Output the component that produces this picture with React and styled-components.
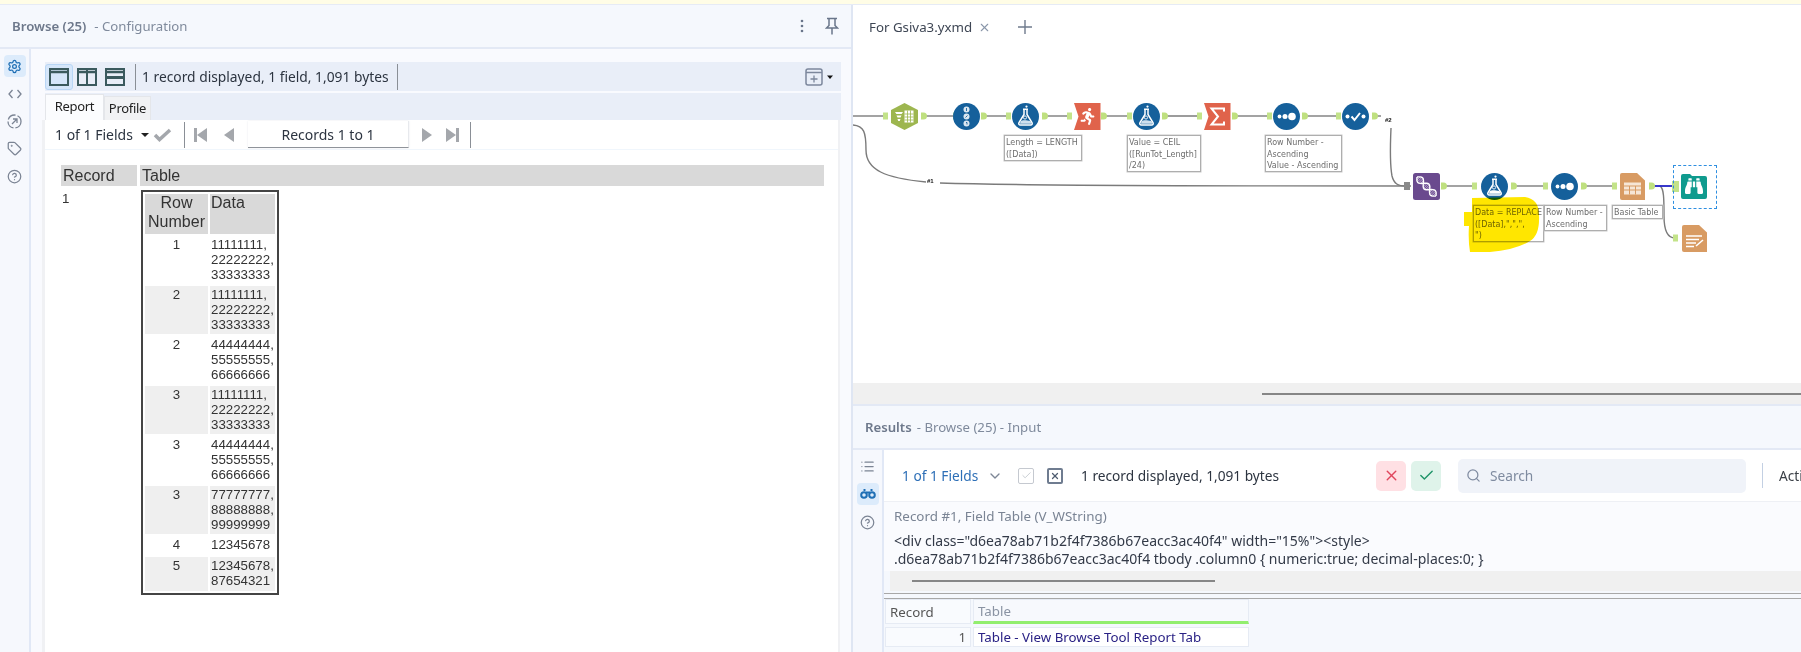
import React from "react";
import styled, { createGlobalStyle } from "styled-components";
import { Settings, Tag, CircleHelp, Search, X, Check, ChevronDown, List } from "lucide-react";
import { FaBinoculars, FaRunning } from "react-icons/fa";

const UI_FONT = `"Noto Sans", "Open Sans", sans-serif`;
const REPORT_FONT = `"Liberation Sans", Arial, sans-serif`;

const Global = createGlobalStyle`
  html, body { margin: 0; padding: 0; background: #fff; }
  body { font-family: ${UI_FONT}; overflow: hidden; }
  * { box-sizing: border-box; }
`;

const Page = styled.div`
  width: 1801px;
  height: 652px;
  display: flex;
  flex-direction: column;
  overflow: hidden;
`;

const NoticeStrip = styled.div`
  height: 5px;
  background: #fffde6;
  border-bottom: 1px solid #e6ebf5;
`;

const Workspace = styled.div`
  flex: 1;
  display: flex;
  min-height: 0;
`;

/* left side, configuration */
const ConfigPanel = styled.section`
  width: 851px;
  display: flex;
  flex-direction: column;
  background: #f9fafe;
`;

const PanelHeader = styled.header`
  height: 44px;
  flex: none;
  display: flex;
  align-items: center;
  padding: 0 12px;
  background: #f5f8fd;
  border-bottom: 2px solid #e3e9f5;
  font-size: 13.2px;
  color: #7f8a9c;
`;

const HeaderTitle = styled.strong`
  font-weight: 600;
  color: #6d788b;
  margin-right: ${(p) => p.$gap}px;
`;

const HeaderTools = styled.div`
  margin-left: auto;
  display: flex;
  align-items: center;
  gap: 21px;
`;

const PanelBody = styled.div`
  flex: 1;
  display: flex;
  min-height: 0;
`;

const Rail = styled.nav`
  width: ${(p) => p.$width}px;
  flex: none;
  display: flex;
  flex-direction: column;
  align-items: center;
  gap: ${(p) => p.$gap}px;
  padding-top: ${(p) => p.$top}px;
  border-right: 2px solid #e1e8f6;
  background: #f6f8fd;
`;

const RailButton = styled.div`
  width: 22px;
  height: 22px;
  display: flex;
  align-items: center;
  justify-content: center;
  border-radius: 4px;
  color: ${(p) => (p.$active ? "#1f6fb5" : "#7b8494")};
  background: ${(p) => (p.$active ? "#dcebfb" : "transparent")};
`;

const ConfigMain = styled.div`
  flex: 1;
  min-width: 0;
  padding: 13px 10px 0 14px;
  display: flex;
  flex-direction: column;
`;

const ViewToolbar = styled.div`
  height: 29px;
  flex: none;
  display: flex;
  align-items: center;
  padding-right: 7px;
  background: #e9eef8;
  font-size: 13.8px;
  color: #2c3440;
`;

const LayoutButton = styled.div`
  width: 28px;
  height: 26px;
  display: flex;
  align-items: center;
  justify-content: center;
  border-radius: 3px;
  background: ${(p) => (p.$active ? "#d5e6fa" : "transparent")};
  border: 1px solid ${(p) => (p.$active ? "#b9d6f5" : "transparent")};
`;

const ToolSep = styled.div`
  width: 1px;
  height: 26px;
  background: #8a8f96;
  margin: 0 ${(p) => p.$gap || 8}px;
`;

const TabStrip = styled.div`
  height: 27px;
  flex: none;
  margin-top: 2px;
  display: flex;
  align-items: flex-end;
  background: #e9eef8;
  font-size: 13px;
  letter-spacing: -0.3px;
  color: #222;
`;

const Tab = styled.div`
  height: ${(p) => (p.$active ? 26 : 24)}px;
  width: ${(p) => (p.$active ? 59 : 47)}px;
  display: flex;
  align-items: center;
  justify-content: center;
  padding-bottom: ${(p) => (p.$active ? 3 : 1)}px;
  background: ${(p) => (p.$active ? "#fbfcfe" : "#f1f2f4")};
  border: 1px solid #e4e6ea;
  border-bottom: 0;
`;

const ReportSheet = styled.div`
  flex: 1;
  background: #fff;
  margin-right: 3px;
  box-shadow: -3px 0 0 #f0f1f4, 2px 0 0 #f0f1f4;
  display: flex;
  flex-direction: column;
  min-height: 0;
`;

const RecordsBar = styled.div`
  height: 30px;
  flex: none;
  display: flex;
  align-items: center;
  padding-left: 10px;
  border-bottom: 1px solid #f0f6fc;
  font-size: 14px;
  color: #2c3440;
`;

const FieldsLabel = styled.span`
  width: 85px;
  flex: none;
`;

const RangeBox = styled.div`
  width: 161px;
  height: 27px;
  flex: none;
  display: flex;
  align-items: center;
  justify-content: center;
  border-bottom: 1px solid #8f939a;
  border-right: 1px solid #e7e9ed;
  box-shadow: 0 0 2px #e8eaee;
`;

const NavIcon = styled.svg`
  width: 14px;
  height: 16px;
  flex: none;
  margin: ${(p) => p.$margin};
`;

const ReportHead = styled.div`
  display: flex;
  gap: 3px;
  margin: 15px 14px 0 16px;
  font: 16px ${REPORT_FONT};
  color: #333;
`;

const HeadCell = styled.div`
  height: 21px;
  line-height: 21px;
  padding-left: 2px;
  background: #d9d9d9;
  width: ${(p) => (p.$width ? `${p.$width}px` : "auto")};
  flex: ${(p) => (p.$width ? "none" : 1)};
`;

const ReportRow = styled.div`
  display: flex;
  margin: 4px 0 0 16px;
  font: 13.3px ${REPORT_FONT};
  color: #333;
`;

const RowNumber = styled.div`
  width: 80px;
  padding: 2px 0 0 1px;
  line-height: 14px;
`;

const NestedTable = styled.table`
  border: 2px solid #444;
  border-spacing: 2px;
  border-collapse: separate;
  background: #fff;
  font: 13.3px/15px ${REPORT_FONT};
  color: #333;
`;

const NestedHead = styled.th`
  height: 40px;
  width: ${(p) => p.$width}px;
  padding: 0 0 0 ${(p) => (p.$center ? 0 : 1)}px;
  background: #d9d9d9;
  font: 400 16px/18.5px ${REPORT_FONT};
  text-align: ${(p) => (p.$center ? "center" : "left")};
  vertical-align: top;
`;

const NestedCell = styled.td`
  height: ${(p) => p.$h}px;
  padding: 1px 1px 2px;
  vertical-align: top;
  text-align: ${(p) => (p.$center ? "center" : "left")};
  background: ${(p) => (p.$shade ? "#efefef" : "#fff")};
  white-space: pre-line;
`;

const Divider = styled.div`
  width: 2px;
  flex: none;
  background: #dfe6f3;
`;

/* right side, workflow and results */
const WorkflowPanel = styled.section`
  flex: 1;
  min-width: 0;
  display: flex;
  flex-direction: column;
  background: #fff;
`;

const DocTabs = styled.div`
  height: 44px;
  flex: none;
  display: flex;
  align-items: center;
  padding-left: 16px;
  font-size: 13.3px;
  color: #3e4654;
`;

const DocClose = styled.span`
  display: flex;
  margin-left: 6px;
  color: #8b97aa;
`;

const DocAdd = styled.span`
  display: flex;
  margin-left: 27px;
  color: #6f7b8d;
`;

const Canvas = styled.div`
  position: relative;
  flex: 1;
  min-height: 0;
  overflow: hidden;
`;

const WireLayer = styled.svg`
  position: absolute;
  left: 0;
  top: 0;
  overflow: visible;
`;

const Node = styled.svg`
  position: absolute;
  left: ${(p) => p.$x - 853}px;
  top: ${(p) => p.$y - 49}px;
  overflow: visible;
`;

const GlyphBadge = styled.span`
  position: absolute;
  left: ${(p) => p.$x - 853}px;
  top: ${(p) => p.$y - 49}px;
  display: flex;
  color: #fff;
`;

const Note = styled.div`
  position: absolute;
  left: ${(p) => p.$x - 853}px;
  top: ${(p) => p.$y - 49}px;
  width: ${(p) => p.$w}px;
  height: ${(p) => p.$h}px;
  padding: 1px;
  border: 1px solid #aeaeae;
  box-shadow: 0 0 0 0.5px #c8c8c8;
  background: #fff;
  font: 8px/11.5px "DejaVu Sans", sans-serif;
  color: #6d6d6d;
  white-space: pre;
  overflow: hidden;
`;

const WireTag = styled.span`
  position: absolute;
  left: ${(p) => p.$x - 853}px;
  top: ${(p) => p.$y - 49}px;
  font: 700 6px/7px "Liberation Sans", sans-serif;
  color: #111;
`;

const Marker = styled.svg`
  position: absolute;
  left: 0;
  top: 0;
  overflow: visible;
  mix-blend-mode: multiply;
  pointer-events: none;
`;

const Selection = styled.div`
  position: absolute;
  left: ${1673 - 853}px;
  top: ${165 - 49}px;
  width: 44px;
  height: 44px;
  border: 1px dashed #2f8fe0;
`;

const CanvasScroll = styled.div`
  height: 21px;
  flex: none;
  padding-left: 409px;
  display: flex;
  align-items: center;
  background: #f0f0f0;
`;

const ScrollThumb = styled.div`
  height: 2px;
  background: #868686;
  width: ${(p) => p.$width};
`;

const ResultsPanel = styled.div`
  height: 248px;
  flex: none;
  display: flex;
  flex-direction: column;
  border-top: 2px solid #e3e9f5;
  background: #f5f8fd;
`;

const ResultsMain = styled.div`
  flex: 1;
  min-width: 0;
  display: flex;
  flex-direction: column;
`;

const ResultsToolbar = styled.div`
  height: 52px;
  flex: none;
  display: flex;
  align-items: center;
  padding-left: 18px;
  background: #fff;
  border-bottom: 1px solid #eef0f5;
  font-size: 13.7px;
  color: #2c3440;
  white-space: nowrap;
  overflow: hidden;
`;

const FieldPicker = styled.span`
  flex: none;
  display: flex;
  align-items: center;
  gap: 9px;
  width: 116px;
  color: #2d6fb7;
`;

const IconBox = styled.span`
  flex: none;
  width: 16px;
  height: 16px;
  margin-right: 13px;
  display: flex;
  align-items: center;
  justify-content: center;
  border-radius: 2px;
  border: ${(p) => (p.$dark ? "2px solid #6f7c90" : "1.5px solid #c5c9d0")};
  color: ${(p) => (p.$dark ? "#4f5c70" : "#c5c9d0")};
`;

const CountText = styled.span`
  margin-left: 5px;
  width: 295px;
  flex: none;
`;

const SquareAction = styled.span`
  width: 30px;
  height: 30px;
  margin-right: 5px;
  flex: none;
  border-radius: 5px;
  display: flex;
  align-items: center;
  justify-content: center;
  background: ${(p) => p.$bg};
  color: ${(p) => p.$fg};
`;

const SearchBox = styled.div`
  width: 288px;
  height: 34px;
  margin-left: 12px;
  flex: none;
  display: flex;
  align-items: center;
  gap: 9px;
  padding-left: 8px;
  border-radius: 5px;
  background: #f0f3f9;
  color: #7f8ba0;
`;

const ToolbarRule = styled.div`
  width: 1px;
  height: 25px;
  flex: none;
  margin: 0 16px;
  background: #c3d0e3;
`;

const ActionsLabel = styled.span`
  flex: none;
  color: #3a3f46;
`;

const CellPreview = styled.div`
  flex: none;
  height: 69px;
  padding: 5px 0 0 10px;
  background: #fafbfe;
  font-size: 14px;
  line-height: 18px;
  color: #333a48;
  white-space: nowrap;
`;

const PreviewTitle = styled.div`
  height: 25px;
  font-size: 13.4px;
  line-height: 18px;
  color: #7a8494;
`;

const PreviewScroll = styled.div`
  height: 20px;
  flex: none;
  margin-left: 6px;
  padding-left: 22px;
  display: flex;
  align-items: center;
  background: #f0f0f0;
`;

const DoubleRule = styled.div`
  height: 6px;
  flex: none;
  background: #f5f8fd;
  border-top: 1px solid #a8a8a8;
  border-bottom: 1px solid #a8a8a8;
  margin-top: 2px;
`;

const GridRow = styled.div`
  display: flex;
  gap: 2px;
  margin-top: ${(p) => p.$top}px;
  padding-left: 1px;
  font-size: 13.3px;
`;

const GridCell = styled.div`
  height: ${(p) => p.$h}px;
  width: ${(p) => p.$w}px;
  display: flex;
  align-items: center;
  padding: 0 4px;
  justify-content: ${(p) => (p.$right ? "flex-end" : "flex-start")};
  color: ${(p) => p.$color || "#555"};
  background: ${(p) => p.$bg || "#f9fbfe"};
  border: 1px solid #e6ebf4;
  border-bottom: ${(p) => (p.$accent ? "3px solid #92ee6e" : "1px solid #e6ebf4")};
`;

const Anchor = ({ x, y, out }) =>
  out ? (
    <path d={`M${x} ${y - 3.5}h2.5a3.5 3.5 0 0 1 0 7H${x}z`} fill="#bfe07f" />
  ) : (
    <rect x={x} y={y - 3.5} width={5} height={7} fill="#c3e389" />
  );

const wires = [
  "M853 116H883",
  "M926 116H953",
  "M986 116H1006",
  "M1044 116H1067",
  "M1106 116H1127",
  "M1164 116H1197",
  "M1236 116H1267",
  "M1306 116H1336",
  "M1374 116H1381",
  "M1391 128C1390 150 1390 165 1392 176C1394 184 1398 186 1406 186",
  "M853 125C864 126 866 132 866 150C866 170 885 178 926 182",
  "M940 183C1040 186 1200 186 1411 186",
  "M1446 186H1473",
  "M1515 186H1545",
  "M1585 186H1612",
  "M1654 186H1672",
  "M1660 186C1664 188 1664 200 1664 216C1664 232 1668 238 1675 238"
];

// diagonal double helix for the join tool
const helixPoint = (s, sign) => {
  const base = 4 + 19 * s;
  const offset = sign * 3.4 * Math.sin(3 * Math.PI * s) * 0.707;
  return [base + offset, base - offset];
};

const helixStrand = (sign) =>
  Array.from({ length: 25 }, (_, i) => helixPoint(i / 24, sign))
    .map(([x, y], i) => `${i ? "L" : "M"}${x.toFixed(1)} ${y.toFixed(1)}`)
    .join("");

const helixRungs = [0.08, 0.14, 0.2, 0.26, 0.41, 0.47, 0.53, 0.59, 0.74, 0.8, 0.86, 0.92]
  .map((s) => {
    const [ax, ay] = helixPoint(s, 1);
    const [bx, by] = helixPoint(s, -1);
    return `M${ax.toFixed(1)} ${ay.toFixed(1)}L${bx.toFixed(1)} ${by.toFixed(1)}`;
  })
  .join("");

const BlueDisc = ({ x, y, children }) => (
  <Node $x={x - 13.5} $y={y - 13.5} width="27" height="27" viewBox="0 0 27 27">
    <circle cx="13.5" cy="13.5" r="13.5" fill="#15609b" />
    {children}
  </Node>
);

const FlaskShape = ({ bright }) => (
  <>
    <circle cx="14.5" cy="3.6" r="1.1" fill="#fff" />
    <path
      d="M11 6.3h5M12 6.5v5l-5 8.2c-.6 1.2 0 2.3 1.4 2.3h10.2c1.4 0 2-1.1 1.4-2.3l-5-8.2v-5"
      fill="none"
      stroke="#fff"
      strokeWidth="1.5"
    />
    <path d="M8.5 18.5c3-2.4 7-.4 10-.6l1 2.8H8z" fill={bright ? "#fff" : "#cfe0ee"} />
    <circle cx="13" cy="14.5" r="1.6" fill="none" stroke="#fff" strokeWidth="0.9" />
  </>
);

const SortDots = () => (
  <>
    <circle cx="6.5" cy="13.5" r="1.9" fill="#fff" />
    <circle cx="12" cy="13.5" r="2.5" fill="#fff" />
    <circle cx="19" cy="13.5" r="3.8" fill="#fff" />
  </>
);

const TagTile = ({ x, y, children }) => (
  <Node $x={x} $y={y} width="27" height="27" viewBox="0 0 27 27">
    <path d="M0 0H26.5V27H0L4.5 13.5z" fill="#e0634b" />
    {children}
  </Node>
);

const OrangeDoc = ({ x, y, children }) => (
  <Node $x={x} $y={y} width="25" height="27" viewBox="0 0 25 27">
    <path d="M2 0H17L25 7.5V27H2a2 2 0 0 1-2-2V2a2 2 0 0 1 2-2z" fill="#d89b63" />
    {children}
  </Node>
);

const WorkflowCanvas = () => (
  <Canvas>
    <WireLayer width="948" height="334" viewBox="853 49 948 334">
      {wires.map((d) => (
        <path key={d} d={d} fill="none" stroke="#7b7b7b" strokeWidth="1.4" />
      ))}
      <path d="M1654 186H1673" stroke="#1414d8" strokeWidth="1.5" />
      {[883, 953, 1006, 1067, 1127, 1197, 1267, 1336].map((x) => (
        <Anchor key={x} x={x} y={116} />
      ))}
      {[921, 981, 1042, 1101, 1162, 1232, 1302, 1372].map((x) => (
        <Anchor key={x} x={x} y={116} out />
      ))}
      <rect x="1404" y="182" width="6" height="8" fill="#8a8a8a" />
      {[1441, 1511, 1581, 1649].map((x) => (
        <Anchor key={x} x={x} y={186} out />
      ))}
      {[1472, 1543, 1612].map((x) => (
        <Anchor key={x} x={x} y={186} />
      ))}
      <rect x="1672" y="181" width="7" height="11" fill="#c3e389" />
      <Anchor x={1673} y={238} />
    </WireLayer>

    <Node $x={890.5} $y={102.5} width="27" height="27" viewBox="0 0 27 27">
      <path d="M13.5 0L27 7V20L13.5 27L0 20V7z" fill="#9db64f" />
      <path d="M4 9h8l-1.4 2H5.4zM5.5 12.5h5l-1 2h-3zM6.5 16h3l-.7 2H7.2z" fill="#fff" />
      <path d="M13.5 7.5h9v12h-9z" fill="#fff" />
      <path d="M16.5 7.5v12M19.5 7.5v12M13.5 11h9M13.5 14h9M13.5 17h9" stroke="#9db64f" strokeWidth="0.8" />
    </Node>

    <BlueDisc x={966} y={116}>
      <circle cx="13.5" cy="6.5" r="3" fill="#dbe7f1" />
      <circle cx="13.5" cy="13.5" r="3" fill="#dbe7f1" />
      <circle cx="13.5" cy="20.5" r="3" fill="#dbe7f1" />
      <path d="M13.5 5v3M12.5 14.5l2-2M13 19.5h1v2" stroke="#15609b" strokeWidth="0.9" fill="none" />
    </BlueDisc>
    <BlueDisc x={1025} y={116}>
      <FlaskShape />
    </BlueDisc>
    <TagTile x={1074} y={103} />
    <GlyphBadge $x={1079} $y={108}>
      <FaRunning size={17} />
    </GlyphBadge>
    <BlueDisc x={1146} y={116}>
      <FlaskShape />
    </BlueDisc>
    <TagTile x={1204} y={103}>
      <path d="M20 8.5V5.5H7.5L14 13.5L7.5 21.5H20V18.5" fill="none" stroke="#fff" strokeWidth="2" />
    </TagTile>
    <BlueDisc x={1286} y={116}>
      <SortDots />
    </BlueDisc>
    <BlueDisc x={1355} y={116}>
      <circle cx="5.5" cy="13.5" r="2" fill="#fff" />
      <path d="M9.5 13.5l3 3.5 5.5-7" fill="none" stroke="#fff" strokeWidth="2" />
      <circle cx="21.5" cy="13.5" r="2" fill="#fff" />
    </BlueDisc>

    <Node $x={1413} $y={173} width="27" height="27" viewBox="0 0 27 27">
      <rect width="27" height="27" rx="2.5" fill="#6a4a8e" />
      <path d={helixRungs} stroke="#d9cde8" strokeWidth="0.7" />
      <path d={helixStrand(1)} fill="none" stroke="#fff" strokeWidth="1.4" />
      <path d={helixStrand(-1)} fill="none" stroke="#fff" strokeWidth="1.4" />
    </Node>
    <BlueDisc x={1494} y={186}>
      <FlaskShape bright />
    </BlueDisc>
    <BlueDisc x={1564} y={186}>
      <SortDots />
    </BlueDisc>
    <OrangeDoc x={1620} y={173}>
      <path d="M4 9.5h17v12H4z" fill="#f6e6d6" />
      <path d="M4 13h17M4 17h17M9.5 13v8.5M15.5 13v8.5" stroke="#d89b63" strokeWidth="1" />
    </OrangeDoc>
    <OrangeDoc x={1682} y={225}>
      <path d="M4 11h16M4 14.5h13M4 18h10M4 21.5h8" stroke="#fff" strokeWidth="1.4" />
      <path d="M14 21l7-6" stroke="#fff" strokeWidth="1.6" />
    </OrangeDoc>

    <Selection />
    <Node $x={1681} $y={173} width="26" height="26" viewBox="0 0 26 26">
      <path d="M2 1h7l2 2h13a2 2 0 0 1 2 2v19a2 2 0 0 1-2 2H2a2 2 0 0 1-2-2V3a2 2 0 0 1 2-2z" fill="#0f9b8e" />
    </Node>
    <GlyphBadge $x={1685} $y={177}>
      <FaBinoculars size={18} />
    </GlyphBadge>

    <WireTag $x={927} $y={178}>#1</WireTag>
    <WireTag $x={1385} $y={117}>#2</WireTag>

    <Note $x={1004} $y={135} $w={78} $h={26}>{"Length = LENGTH\n([Data])"}</Note>
    <Note $x={1127} $y={135} $w={74} $h={37}>{"Value = CEIL\n([RunTot_Length]\n/24)"}</Note>
    <Note $x={1265} $y={135} $w={77} $h={37}>{"Row Number -\nAscending\nValue - Ascending"}</Note>
    <Note $x={1473} $y={205} $w={71} $h={37}>{"Data = REPLACE\n([Data],\",\",\",\n\")"}</Note>
    <Note $x={1544} $y={205} $w={63} $h={26}>{"Row Number -\nAscending"}</Note>
    <Note $x={1612} $y={205} $w={51} $h={14}>Basic Table</Note>

    <Marker width="948" height="334" viewBox="853 49 948 334">
      <path
        d="M1472 198L1525 197Q1539 199 1539 215Q1540 235 1530 241Q1515 250 1490 252L1470 252Q1468 240 1469 226L1464 226L1464 212L1472 212Z"
        fill="#ffe600"
      />
    </Marker>
  </Canvas>
);

const nestedRows = [
  ["1", "11111111,\n22222222,\n33333333"],
  ["2", "11111111,\n22222222,\n33333333"],
  ["2", "44444444,\n55555555,\n66666666"],
  ["3", "11111111,\n22222222,\n33333333"],
  ["3", "44444444,\n55555555,\n66666666"],
  ["3", "77777777,\n88888888,\n99999999"],
  ["4", "12345678", 19],
  ["5", "12345678,\n87654321", 34]
];

const LayoutIcon = ({ variant }) => (
  <svg width="20" height="20" viewBox="0 0 20 20" fill="none" stroke="#3b5a5e" strokeWidth="2">
    <rect x="1" y="2" width="18" height="16" />
    <path d="M1 5h18" strokeWidth="2.5" />
    {variant === "split" && <path d="M10 2v16" />}
    {variant === "stack" && <path d="M1 10.5h18" strokeWidth="3" />}
  </svg>
);

const First = ({ flip, margin }) => (
  <NavIcon viewBox="0 0 14 16" $margin={margin} fill="#a4a7ac">
    <g transform={flip ? "translate(14 0) scale(-1 1)" : undefined}>
      <rect x="0" y="1" width="3" height="14" />
      <path d="M13 1V15L3 8z" />
    </g>
  </NavIcon>
);

const Prev = ({ flip, margin }) => (
  <NavIcon viewBox="0 0 14 16" $margin={margin} fill="#a4a7ac">
    <path d={flip ? "M2 1V15L12 8z" : "M12 1V15L2 8z"} />
  </NavIcon>
);

const App = () => (
  <Page>
    <Global />
    <NoticeStrip />
    <Workspace>
      <ConfigPanel>
        <PanelHeader>
          <HeaderTitle $gap={8}>Browse (25)</HeaderTitle>- Configuration
          <HeaderTools>
            <svg width="4" height="14" viewBox="0 0 4 14" fill="#69758a">
              <circle cx="2" cy="2" r="1.3" />
              <circle cx="2" cy="7" r="1.3" />
              <circle cx="2" cy="12" r="1.3" />
            </svg>
            <svg width="14" height="18" viewBox="0 0 14 18" fill="none" stroke="#69758a" strokeWidth="1.5">
              <path d="M2 1.5h10M4 1.5v7L1.5 11h11L10 8.5v-7M7 11v6.5" />
            </svg>
          </HeaderTools>
        </PanelHeader>
        <PanelBody>
          <Rail $width={31} $gap={5.5} $top={6}>
            <RailButton $active>
              <Settings size={15} />
            </RailButton>
            <RailButton>
              <svg width="14" height="10" viewBox="0 0 14 10" fill="none" stroke="#7b8494" strokeWidth="1.3">
                <path d="M4.5 1L1 5l3.5 4M9.5 1L13 5l-3.5 4" />
              </svg>
            </RailButton>
            <RailButton>
              <svg width="15" height="15" viewBox="0 0 15 15" fill="none" stroke="#7b8494" strokeWidth="1.3">
                <circle cx="7.5" cy="7.5" r="6.5" strokeDasharray="9 2" />
                <path d="M5 10l5-5M6 5h4v4" />
              </svg>
            </RailButton>
            <RailButton>
              <Tag size={15} />
            </RailButton>
            <RailButton>
              <CircleHelp size={15} />
            </RailButton>
          </Rail>
          <ConfigMain>
            <ViewToolbar>
              <LayoutButton $active>
                <LayoutIcon />
              </LayoutButton>
              <LayoutButton>
                <LayoutIcon variant="split" />
              </LayoutButton>
              <LayoutButton>
                <LayoutIcon variant="stack" />
              </LayoutButton>
              <ToolSep $gap={6} />
              1 record displayed, 1 field, 1,091 bytes
              <ToolSep />
              <svg width="29" height="18" viewBox="0 0 29 18" style={{ marginLeft: "auto" }}>
                <rect x="1" y="1" width="16" height="16" rx="2" fill="none" stroke="#7c879c" strokeWidth="1.5" />
                <path d="M1 4.5h16" stroke="#7c879c" strokeWidth="1.5" />
                <path d="M9 7.5v7M5.5 11h7" stroke="#7c879c" strokeWidth="1.3" />
                <path d="M22 7.5h6l-3 3.5z" fill="#111" />
              </svg>
            </ViewToolbar>
            <TabStrip>
              <Tab $active>Report</Tab>
              <Tab>Profile</Tab>
            </TabStrip>
            <ReportSheet>
              <RecordsBar>
                <FieldsLabel>1 of 1 Fields</FieldsLabel>
                <svg width="36" height="16" viewBox="0 0 36 16">
                  <path d="M1 6h8l-4 4z" fill="#222" />
                  <path d="M15 8l4.5 4.5L30 3" fill="none" stroke="#a4a7ac" strokeWidth="3.5" />
                </svg>
                <ToolSep $gap={8} />
                <First margin="0 14px 0 1px" />
                <Prev margin="0 12px 0 0" />
                <RangeBox>Records 1 to 1</RangeBox>
                <Prev flip margin="0 11px 0 11px" />
                <First flip margin="0 9px 0 0" />
                <ToolSep $gap={2} />
              </RecordsBar>
              <ReportHead>
                <HeadCell $width={76}>Record</HeadCell>
                <HeadCell>Table</HeadCell>
              </ReportHead>
              <ReportRow>
                <RowNumber>1</RowNumber>
                <NestedTable>
                  <thead>
                    <tr>
                      <NestedHead $width={63} $center>
                        Row
                        <br />
                        Number
                      </NestedHead>
                      <NestedHead $width={65}>Data</NestedHead>
                    </tr>
                  </thead>
                  <tbody>
                    {nestedRows.map(([num, data, h], i) => (
                      <tr key={i}>
                        <NestedCell $h={h} $center $shade={i % 2 === 1}>{num}</NestedCell>
                        <NestedCell $h={h} $shade={i % 2 === 1}>{data}</NestedCell>
                      </tr>
                    ))}
                  </tbody>
                </NestedTable>
              </ReportRow>
            </ReportSheet>
          </ConfigMain>
        </PanelBody>
      </ConfigPanel>
      <Divider />
      <WorkflowPanel>
        <DocTabs>
          For Gsiva3.yxmd
          <DocClose>
            <X size={13} />
          </DocClose>
          <DocAdd>
            <svg width="14" height="14" viewBox="0 0 14 14" stroke="currentColor" strokeWidth="1.4">
              <path d="M7 0v14M0 7h14" />
            </svg>
          </DocAdd>
        </DocTabs>
        <WorkflowCanvas />
        <CanvasScroll>
          <ScrollThumb $width="100%" />
        </CanvasScroll>
        <ResultsPanel>
          <PanelHeader>
            <HeaderTitle $gap={5}>Results</HeaderTitle>- Browse (25) - Input
          </PanelHeader>
          <PanelBody>
            <Rail $width={31} $gap={6} $top={5}>
              <RailButton>
                <List size={15} />
              </RailButton>
              <RailButton $active>
                <svg width="16" height="10" viewBox="0 0 16 10" fill="none" stroke="#1f6fb5" strokeWidth="2">
                  <circle cx="4" cy="6" r="2.8" />
                  <circle cx="12" cy="6" r="2.8" />
                  <path d="M6 3.5h4M3.5 1h2M10.5 1h2" />
                </svg>
              </RailButton>
              <RailButton>
                <CircleHelp size={15} />
              </RailButton>
            </Rail>
            <ResultsMain>
              <ResultsToolbar>
                <FieldPicker>
                  1 of 1 Fields
                  <ChevronDown size={16} color="#7d8796" />
                </FieldPicker>
                <IconBox>
                  <Check size={11} />
                </IconBox>
                <IconBox $dark>
                  <X size={10} strokeWidth={3} />
                </IconBox>
                <CountText>1 record displayed, 1,091 bytes</CountText>
                <SquareAction $bg="#ffe0e4" $fg="#e0455c">
                  <X size={17} />
                </SquareAction>
                <SquareAction $bg="#dff3ea" $fg="#1f9468">
                  <Check size={17} />
                </SquareAction>
                <SearchBox>
                  <Search size={15} />
                  Search
                </SearchBox>
                <ToolbarRule />
                <ActionsLabel>Actions</ActionsLabel>
              </ResultsToolbar>
              <CellPreview>
                <PreviewTitle>Record #1, Field Table (V_WString)</PreviewTitle>
                {'<div class="d6ea78ab71b2f4f7386b67eacc3ac40f4" width="15%"><style>'}
                <br />
                {".d6ea78ab71b2f4f7386b67eacc3ac40f4 tbody .column0 { numeric:true; decimal-places:0; }"}
              </CellPreview>
              <PreviewScroll>
                <ScrollThumb $width="303px" />
              </PreviewScroll>
              <DoubleRule />
              <GridRow $top={0}>
                <GridCell $w={86} $h={25}>Record</GridCell>
                <GridCell $w={276} $h={25} $accent $color="#8a93a3" $bg="#f7f9fd">Table</GridCell>
              </GridRow>
              <GridRow $top={3}>
                <GridCell $w={86} $h={20} $right>1</GridCell>
                <GridCell $w={276} $h={20} $color="#2a2285" $bg="#fff">Table - View Browse Tool Report Tab</GridCell>
              </GridRow>
            </ResultsMain>
          </PanelBody>
        </ResultsPanel>
      </WorkflowPanel>
    </Workspace>
  </Page>
);

export default App;
